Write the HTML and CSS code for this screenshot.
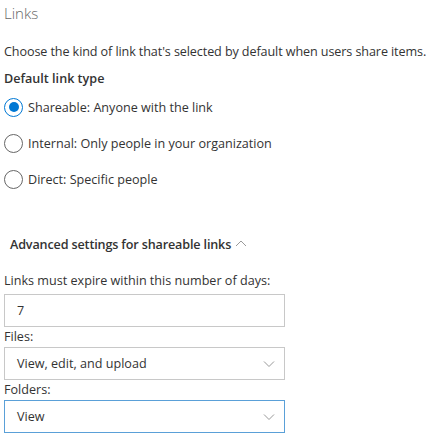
FILE: index.html
```html
<!DOCTYPE html>
<html>
<head>
<meta charset="utf-8">
<link rel="stylesheet" href="styles.css">
</head>
<body>
<div class="page">
  <h2 class="title">Links</h2>
  <p class="desc">Choose the kind of link that's selected by default when users share items.</p>
  <div class="group-label">Default link type</div>
  <div class="radios">
    <label class="radio checked"><span class="circle"></span><span>Shareable: Anyone with the link</span></label>
    <label class="radio"><span class="circle"></span><span>Internal: Only people in your organization</span></label>
    <label class="radio"><span class="circle"></span><span>Direct: Specific people</span></label>
  </div>
  <div class="advanced">
    <span>Advanced settings for shareable links</span>
    <svg class="chev-up" width="12" height="8" viewBox="0 0 12 8"><path d="M1 7 L6 2 L11 7" fill="none" stroke="#9a9a9a" stroke-width="1"/></svg>
  </div>
  <div class="field-label">Links must expire within this number of days:</div>
  <div class="box">7</div>
  <div class="field-label small">Files:</div>
  <div class="box select"><span>View, edit, and upload</span><svg width="12" height="8" viewBox="0 0 12 8"><path d="M1 1.5 L6 6.5 L11 1.5" fill="none" stroke="#999" stroke-width="1"/></svg></div>
  <div class="field-label small">Folders:</div>
  <div class="box select focus"><span>View</span><svg width="12" height="8" viewBox="0 0 12 8"><path d="M1 1.5 L6 6.5 L11 1.5" fill="none" stroke="#999" stroke-width="1"/></svg></div>
</div>
</body>
</html>
```
FILE: styles.css
```css
html, body { margin: 0; padding: 0; background: #fff; }
body { font-family: "Open Sans", "Noto Sans", sans-serif; color: #333; font-size: 12.6px; }
.page { padding: 0 4px; width: 423px; }
.title { margin: 0; padding-top: 3px; font-size: 15px; font-weight: 300; color: #666; line-height: 20px; }
.desc { margin: 20px 0 0; line-height: 17px; letter-spacing: -0.1px; white-space: nowrap; }
.group-label { margin-top: 10px; font-weight: 600; line-height: 17px; }
.radios { margin-top: 10px; display: flex; flex-direction: column; gap: 16px; }
.radio { display: flex; align-items: center; gap: 5px; height: 20px; }
.circle { width: 19px; height: 19px; border: 1px solid #666; border-radius: 50%; box-sizing: border-box; position: relative; flex: none; }
.radio.checked .circle { border-color: #0078d4; }
.radio.checked .circle::after { content: ""; position: absolute; left: 3.5px; top: 3.5px; width: 10px; height: 10px; border-radius: 50%; background: #0078d4; }
.advanced { margin-top: 47px; padding-left: 6px; font-weight: 600; line-height: 17px; display: flex; align-items: center; gap: 4px; letter-spacing: -0.15px; }
.chev-up { margin-top: -3px; }
.field-label { margin-top: 19px; line-height: 17px; }
.field-label.small { margin-top: 1px; }
.box { margin-top: 5px; width: 281px; height: 33px; border: 1px solid #c8c8c8; box-sizing: border-box; padding: 0 9px 0 12px; display: flex; align-items: center; justify-content: space-between; }
.select { margin-top: 2px; }
.box.focus { border-color: #5aa0d8; }
```
